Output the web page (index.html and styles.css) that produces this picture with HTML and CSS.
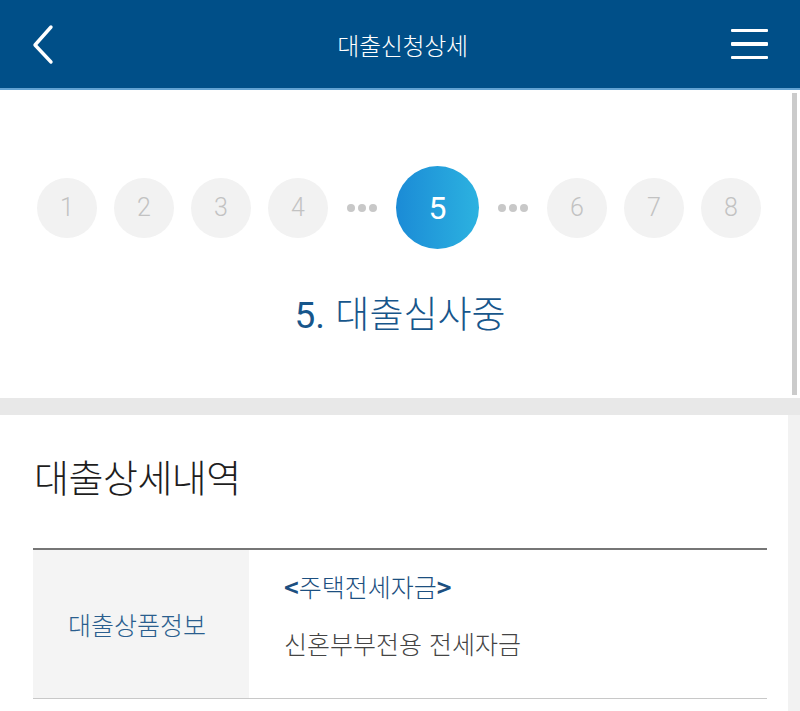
FILE: index.html
```html
<!DOCTYPE html>
<html lang="ko">
<head>
<meta charset="utf-8">
<title>대출신청상세</title>
<link rel="stylesheet" href="styles.css">
</head>
<body>
<header class="topbar">
  <div class="back">
    <svg width="40" height="50" viewBox="0 0 40 50"><polyline points="19,8 3,26 19,43" fill="none" stroke="#fff" stroke-width="3.4" stroke-linecap="round" stroke-linejoin="round"/></svg>
  </div>
  <h1 class="title">대출신청상세</h1>
  <div class="menu">
    <span class="bar"></span><span class="bar"></span><span class="bar"></span>
  </div>
</header>
<section class="status">
  <div class="status-main">
    <div class="steps">
      <div class="step">1</div>
      <div class="step">2</div>
      <div class="step">3</div>
      <div class="step">4</div>
      <div class="dots"><i></i><i></i><i></i></div>
      <div class="step active">5</div>
      <div class="dots"><i></i><i></i><i></i></div>
      <div class="step">6</div>
      <div class="step">7</div>
      <div class="step">8</div>
    </div>
    <p class="status-title"><span class="num">5.</span> 대출심사중</p>
  </div>
  <div class="rail"><div class="thumb"></div></div>
</section>
<div class="band"></div>
<section class="detail">
  <div class="detail-main">
    <h2 class="heading">대출상세내역</h2>
    <div class="table">
      <div class="row">
        <div class="th">대출상품정보</div>
        <div class="td">
          <p class="product"><b>&lt;</b>주택전세자금<b>&gt;</b></p>
          <p class="product-name">신혼부부전용 전세자금</p>
        </div>
      </div>
    </div>
  </div>
  <div class="rail-track"></div>
</section>
</body>
</html>
```
FILE: styles.css
```css
* { box-sizing: border-box; }
html, body { margin: 0; padding: 0; }
body {
  width: 800px;
  height: 711px;
  overflow: hidden;
  background: #fff;
  font-family: "Noto Sans CJK KR", "Noto Sans", Roboto, sans-serif;
}
p, h1, h2 { margin: 0; font-weight: 400; }

.topbar {
  height: 90px;
  background: #004f88;
  border-bottom: 2px solid #62a3d3;
  display: flex;
  align-items: center;
  justify-content: space-between;
  padding: 0 32px 0 32px;
}
.back { width: 40px; height: 50px; display: flex; }
.title {
  color: #fff;
  font-size: 24px;
  font-weight: 300;
  letter-spacing: -0.3px;
  margin-left: 2px;
}
.menu {
  width: 37px;
  display: flex;
  flex-direction: column;
  gap: 10px;
}
.bar {
  display: block;
  height: 3.5px;
  background: #fff;
  border-radius: 1px;
}

.status {
  height: 308px;
  display: grid;
  grid-template-columns: 788px 12px;
}
.status-main { padding-top: 76px; }
.steps {
  display: flex;
  align-items: center;
  gap: 17px;
  padding-left: 37px;
}
.step {
  width: 60px;
  height: 60px;
  border-radius: 50%;
  background: #f2f2f2;
  color: #c2c2c2;
  font-family: Roboto, "Noto Sans", sans-serif;
  font-weight: 300;
  font-size: 25px;
  display: flex;
  align-items: center;
  justify-content: center;
}
.step.active {
  width: 83px;
  height: 83px;
  background: linear-gradient(90deg, #1b8bd6 0%, #2cb2e0 100%);
  color: #fff;
  font-size: 32px;
  font-weight: 400;
}
.dots {
  width: 34px;
  display: flex;
  justify-content: center;
  gap: 3px;
}
.dots i {
  width: 8px;
  height: 8px;
  border-radius: 50%;
  background: #c8c8c8;
}
.status-title {
  margin-top: 41px;
  text-align: center;
  padding-left: 12px;
  color: #17568b;
  font-size: 37px;
  font-weight: 300;
  line-height: 44px;
}
.status-title .num { font-family: Roboto, "Noto Sans", sans-serif; font-weight: 400; }
.rail { padding: 3px 3px 3px 4px; }
.thumb { height: 100%; width: 5px; background: #cbcbcb; }

.band { height: 17px; background: #e8e8e8; }

.detail {
  display: grid;
  grid-template-columns: 788px 12px;
  height: 296px;
}
.rail-track { background: #f2f2f2; }
.detail-main { padding: 33px 21px 0 33px; }
.heading {
  font-size: 38px;
  font-weight: 300;
  line-height: 56px;
  color: #1e1e1e;
  padding-left: 1px;
  letter-spacing: -0.5px;
}
.table {
  margin-top: 44px;
  border-top: 2px solid #767676;
  border-bottom: 1px solid #c8c8c8;
}
.row { display: flex; height: 148px; }
.th {
  width: 216px;
  background: #f4f4f4;
  display: flex;
  align-items: center;
  justify-content: center;
  padding-right: 8px;
  color: #2a5e8e;
  font-size: 25px;
  font-weight: 300;
}
.td {
  flex: 1;
  padding: 18px 0 0 35px;
  font-size: 25px;
  font-weight: 300;
}
.product { color: #1c4f80; line-height: 36px; font-weight: 300; }
.product b { font-weight: 700; }
.product-name { color: #444; margin-top: 21px; line-height: 36px; font-weight: 300; }
```
